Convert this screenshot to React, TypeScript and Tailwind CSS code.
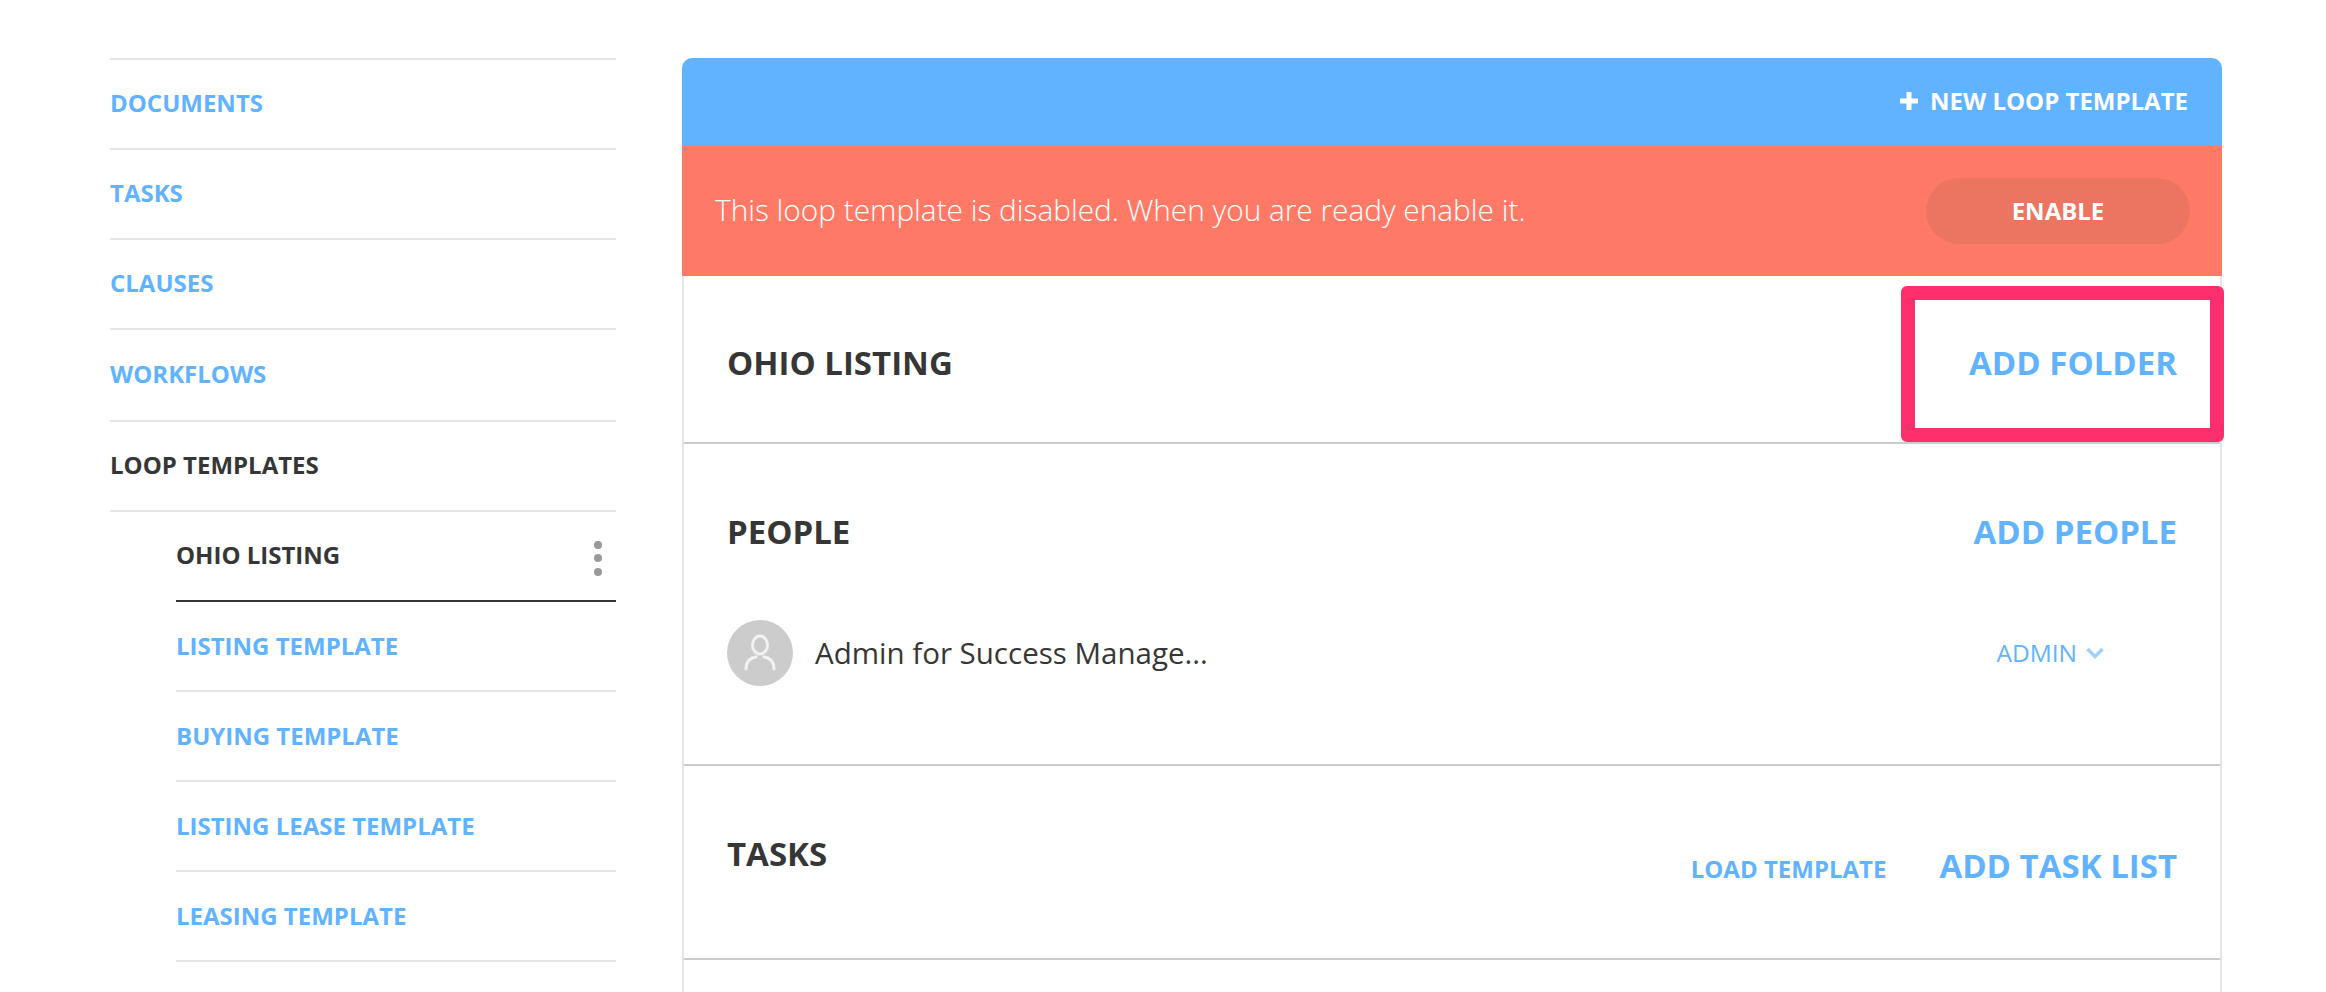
const FONT = "font-['Open_Sans',sans-serif]"

const mainLinks = ['DOCUMENTS', 'TASKS', 'CLAUSES']
const templateLinks = ['LISTING TEMPLATE', 'BUYING TEMPLATE', 'LISTING LEASE TEMPLATE', 'LEASING TEMPLATE']

function Sidebar() {
  return (
    <aside className="w-[506px] shrink-0 text-[24px] font-bold">
      <div className="border-t-2 border-[#e6e6e6]">
        {mainLinks.map((label) => (
          <div key={label} className="flex h-[90px] items-center border-b-2 border-[#e6e6e6] pb-[2px] text-[#62b3ff]">
            {label}
          </div>
        ))}
        <div className="flex h-[92px] items-center border-b-2 border-[#e6e6e6] pb-[2px] text-[#62b3ff]">
          WORKFLOWS
        </div>
        <div className="flex h-[90px] items-center border-b-2 border-[#e6e6e6] pb-[2px] text-[#363636]">
          LOOP TEMPLATES
        </div>
      </div>
      <div className="ml-[66px]">
        <div className="flex h-[90px] items-center justify-between border-b-2 border-[#363636] pr-[14px] text-[#363636]">
          <span className="-mt-[2px]">OHIO LISTING</span>
          <div className="mt-[4px] flex flex-col gap-[5.5px]">
            <span className="h-2 w-2 rounded-full bg-[#999999]" />
            <span className="h-2 w-2 rounded-full bg-[#999999]" />
            <span className="h-2 w-2 rounded-full bg-[#999999]" />
          </div>
        </div>
        {templateLinks.map((label) => (
          <div key={label} className="flex h-[90px] items-center border-b-2 border-[#e6e6e6] text-[#62b3ff]">
            {label}
          </div>
        ))}
      </div>
    </aside>
  )
}

function Avatar() {
  return (
    <div className="flex h-[66px] w-[66px] items-center justify-center rounded-full bg-[#cccccc]">
      <svg className="h-[40px] w-[40px]" viewBox="0 0 40 40" fill="none" stroke="#f2f2f2" strokeWidth={3}>
        <ellipse cx="20" cy="12" rx="7.5" ry="9" />
        <path d="M6 36c0-7 4-11 10-12M34 36c0-7-4-11-10-12" strokeLinecap="round" />
      </svg>
    </div>
  )
}

export default function App() {
  return (
    <div className={`flex h-[992px] overflow-hidden bg-white pl-[110px] pt-[58px] ${FONT}`}>
      <Sidebar />
      <main className="ml-[66px] w-[1540px] shrink-0">
        {/* Blue bar */}
        <div className="flex h-[88px] items-center justify-end gap-[12px] rounded-t-[10px] bg-[#62b3ff] pb-[2px] pr-[34px] text-[24px] font-bold text-white">
          <svg className="h-[18px] w-[18px]" viewBox="0 0 18 18" fill="white">
            <path d="M6.5 0h5v6.5H18v5h-6.5V18h-5v-6.5H0v-5h6.5z" />
          </svg>
          NEW LOOP TEMPLATE
        </div>

        {/* Disabled banner */}
        <div className="flex h-[130px] items-center justify-between bg-[#ff7a66] pl-[33px] pr-[32px]">
          <span className="-mt-[2px] text-[29.8px] font-light text-white">This loop template is disabled. When you are ready enable it.</span>
          <button className="flex h-[66px] w-[264px] items-center justify-center rounded-full bg-[#ec7562] text-[24px] font-bold text-white">
            ENABLE
          </button>
        </div>

        {/* Sections */}
        <div className="border-x-2 border-[#e6e6e6] text-[#363636]">
          <section className="relative flex h-[168px] items-center justify-between border-b-2 border-[#cccccc] px-[43px] pt-[8px]">
            <h2 className="text-[33px] font-bold">OHIO LISTING</h2>
            <a className="text-[33px] font-bold text-[#62b3ff]">ADD FOLDER</a>
            {/* Highlight around the action */}
            <div className="absolute -right-[4px] top-[10px] h-[156px] w-[323px] rounded-[6px] border-[14px] border-[#ff2f6d]" />
          </section>

          <section className="h-[322px] border-b-2 border-[#cccccc] px-[43px]">
            <div className="flex h-[176px] items-center justify-between">
              <h2 className="text-[33px] font-bold">PEOPLE</h2>
              <a className="text-[33px] font-bold text-[#62b3ff]">ADD PEOPLE</a>
            </div>
            <div className="flex items-center">
              <Avatar />
              <span className="ml-[22px] text-[29.5px] font-medium">Admin for Success Manage...</span>
              <span className="ml-auto mr-[73px] flex items-center gap-[9px] text-[24.5px] text-[#62b3ff]">
                ADMIN
                <svg className="h-[12px] w-[18px]" viewBox="0 0 18 12" fill="none" stroke="#9fd0ff" strokeWidth={3.5}>
                  <path d="M1.5 2 9 9.5 16.5 2" />
                </svg>
              </span>
            </div>
          </section>

          <section className="flex h-[194px] items-center justify-between border-b-2 border-[#cccccc] px-[43px]">
            <h2 className="-mt-[16px] text-[33px] font-bold">TASKS</h2>
            <div className="flex items-center gap-[53px] pt-[8px]">
              <a className="mt-[5px] text-[24px] font-bold text-[#62b3ff]">LOAD TEMPLATE</a>
              <a className="text-[33px] font-bold text-[#62b3ff]">ADD TASK LIST</a>
            </div>
          </section>

          <div className="h-[40px]" />
        </div>
      </main>
    </div>
  )
}
